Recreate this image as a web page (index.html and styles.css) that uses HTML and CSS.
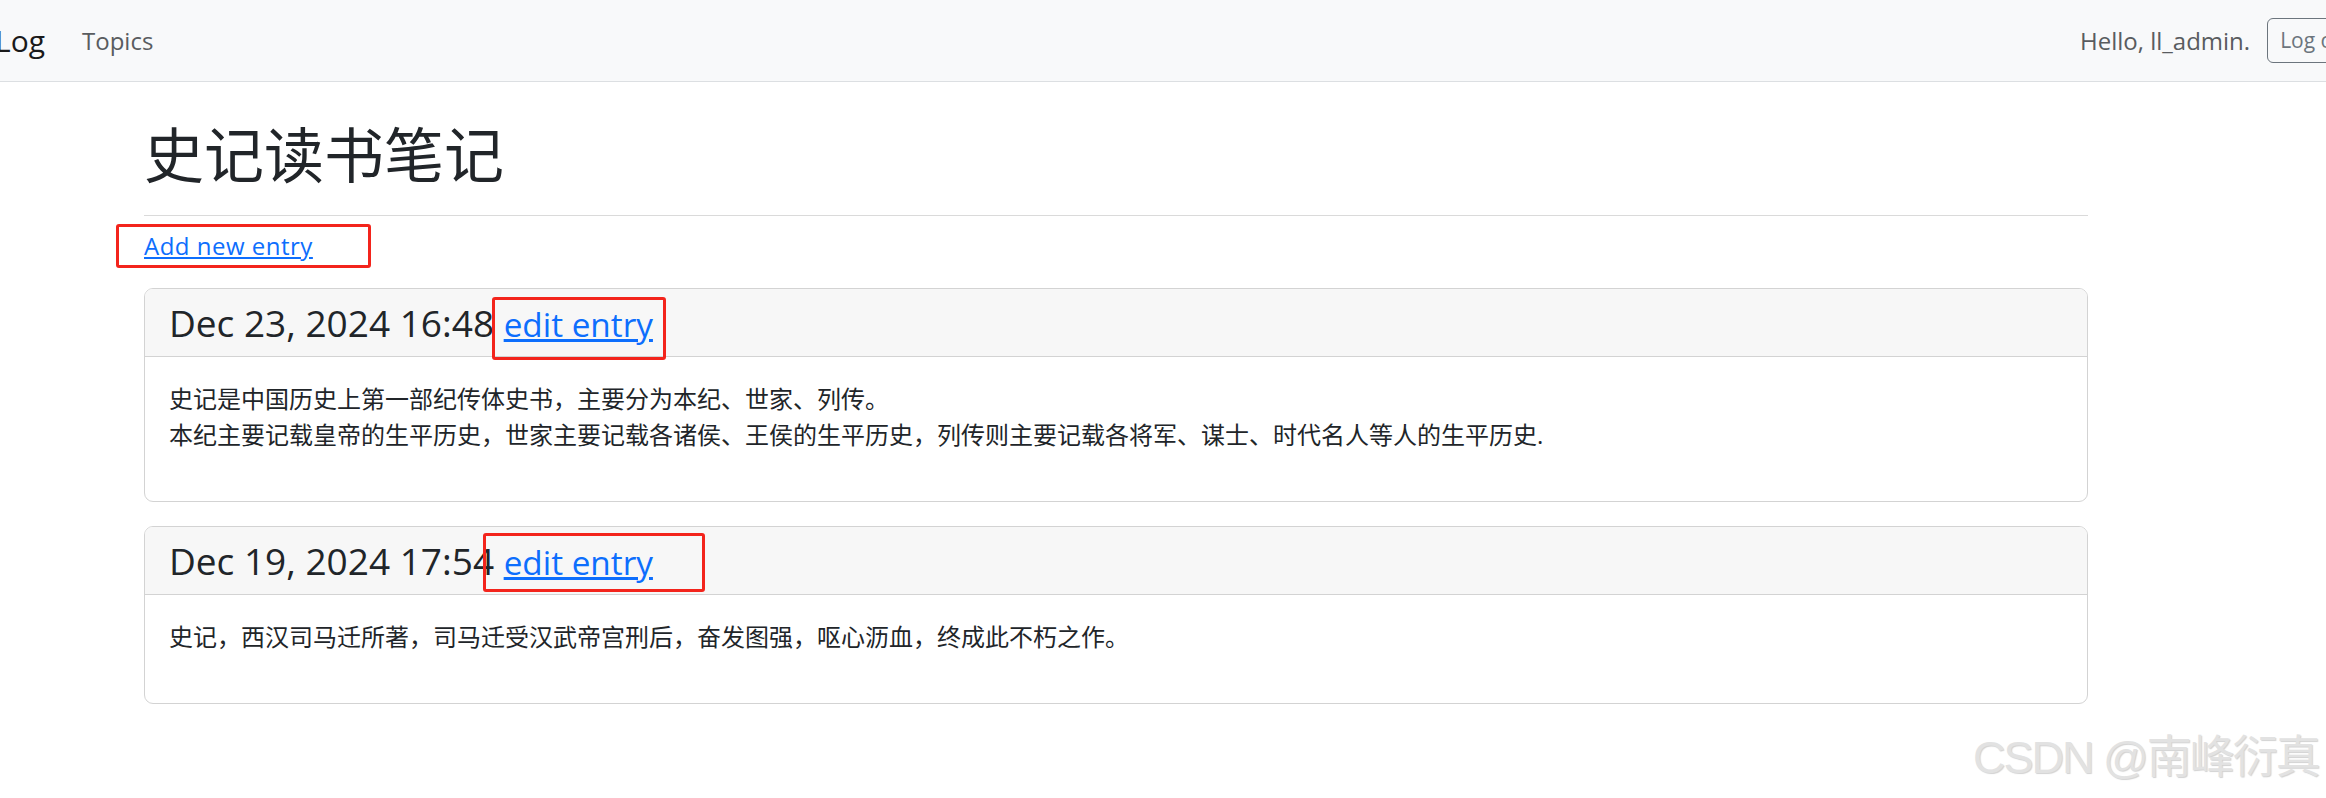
FILE: index.html
```html
<!DOCTYPE html>
<html lang="zh-CN">
<head>
<meta charset="utf-8">
<title>Learning Log</title>
<link rel="stylesheet" href="styles.css">
</head>
<body>
<nav class="navbar">
  <div class="brand-wrap"><a class="brand" href="#">Learning Log</a></div>
  <a class="nav-link" href="#">Topics</a>
  <div class="spacer"></div>
  <div class="user">
    <span class="hello">Hello, ll_admin.</span>
    <button class="btn-logout" type="button">Log out</button>
  </div>
</nav>

<main class="container">
  <div class="page-header">
    <h1>史记读书笔记</h1>
  </div>

  <p class="add"><a href="#">Add new entry</a></p>

  <div class="card">
    <h4 class="card-header">Dec 23, 2024 16:48 <small><a href="#">edit entry</a></small></h4>
    <div class="card-body">
      <p>史记是中国历史上第一部纪传体史书，主要分为本纪、世家、列传。<br>本纪主要记载皇帝的生平历史，世家主要记载各诸侯、王侯的生平历史，列传则主要记载各将军、谋士、时代名人等人的生平历史.</p>
    </div>
  </div>

  <div class="card">
    <h4 class="card-header">Dec 19, 2024 17:54 <small><a href="#">edit entry</a></small></h4>
    <div class="card-body">
      <p>史记，西汉司马迁所著，司马迁受汉武帝宫刑后，奋发图强，呕心沥血，终成此不朽之作。</p>
    </div>
  </div>
</main>

<div class="mark mark-add"></div>
<div class="mark mark-edit1"></div>
<div class="mark mark-edit2"></div>

<div class="watermark">CSDN @南峰衍真</div>
</body>
</html>
```

FILE: styles.css
```css
html, body {
  margin: 0;
  padding: 0;
}

body {
  position: relative;
  width: 2326px;
  height: 798px;
  overflow: hidden;
  background: #ffffff;
  color: #212529;
  font-family: "Open Sans", "Noto Sans CJK SC", sans-serif;
  font-size: 24px;
  line-height: 1.5;
}

a {
  color: #0d6efd;
}

/* ---------- navbar ---------- */
.navbar {
  display: flex;
  align-items: center;
  height: 81px;
  background: #f8f9fa;
  border-bottom: 1px solid #dcdfe2;
  margin-bottom: 37px;
  white-space: nowrap;
}

.brand-wrap {
  flex: 0 0 45px;
  width: 45px;
  min-width: 0;
  display: flex;
  justify-content: flex-end;
}

.brand {
  flex: none;
  font-size: 30px;
  line-height: 45px;
  color: #1a1a1a;
  text-decoration: none;
}

.nav-link {
  margin-left: 37px;
  font-size: 24px;
  line-height: 36px;
  color: #595c5f;
  text-decoration: none;
}

.spacer {
  flex: 1;
}

.user {
  flex: 0 0 246px;
  width: 246px;
  min-width: 0;
  display: flex;
  align-items: center;
}

.hello {
  flex: none;
  font-size: 24px;
  line-height: 36px;
  color: #595c5f;
}

.btn-logout {
  flex: none;
  margin-left: 17px;
  padding: 6px 12px;
  font-family: inherit;
  font-size: 21px;
  line-height: 31.5px;
  color: #6c757d;
  background: transparent;
  border: 1px solid #6c757d;
  border-radius: 6px;
}

/* ---------- main ---------- */
.container {
  margin-left: 144px;
  width: 1944px;
}

.page-header {
  padding-bottom: 12px;
  margin-bottom: 12px;
  border-bottom: 1px solid #dadada;
}

.page-header h1 {
  margin: 0 0 12px;
  font-size: 60px;
  line-height: 72px;
  font-weight: 400;
  color: #212529;
}

.add {
  margin: 0 0 24px;
  line-height: 36px;
  letter-spacing: 0.5px;
}

/* ---------- cards ---------- */
.card {
  border: 1px solid #d3d3d3;
  border-radius: 9px;
  margin-bottom: 24px;
  overflow: hidden;
}

.card-header {
  margin: 0;
  padding: 12px 24px;
  background: #f7f7f7;
  border-bottom: 1px solid #d3d3d3;
  font-size: 37px;
  line-height: 43px;
  font-weight: 400;
  color: #212529;
}

.card-header small {
  font-size: 0.9em;
  line-height: 1;
}

.card-body {
  padding: 24px;
}

.card-body p {
  margin: 0 0 24px;
  font-size: 24px;
  line-height: 36px;
}

/* ---------- annotations drawn over the page ---------- */
.mark {
  position: absolute;
  border: 3px solid #f3241c;
  border-radius: 3px;
  box-sizing: border-box;
}

.mark-add {
  left: 116px;
  top: 224px;
  width: 255px;
  height: 44px;
}

.mark-edit1 {
  left: 492px;
  top: 297px;
  width: 174px;
  height: 63px;
}

.mark-edit2 {
  left: 483px;
  top: 533px;
  width: 222px;
  height: 59px;
}

.watermark {
  position: absolute;
  left: 1973px;
  top: 730px;
  font-family: "Liberation Sans", "Noto Sans CJK SC", sans-serif;
  font-size: 45px;
  line-height: 56px;
  color: #e2e2e2;
  text-shadow: 1px 1px 1px rgba(0, 0, 0, 0.18);
  letter-spacing: -2px;
  white-space: nowrap;
}
```
